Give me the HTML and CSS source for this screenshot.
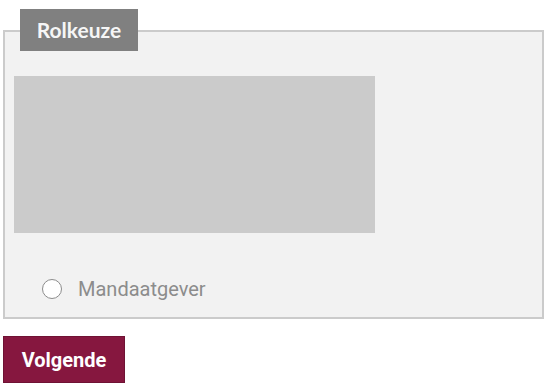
FILE: index.html
```html
<!DOCTYPE html>
<html lang="nl">
<head>
<meta charset="utf-8">
<link rel="stylesheet" href="styles.css">
</head>
<body>
<form class="page">
  <div class="role-set" role="group" aria-labelledby="rol-title">
    <div class="role-legend" id="rol-title">Rolkeuze</div>
    <div class="placeholder"></div>
    <label class="option">
      <input type="radio" name="rol" class="radio">
      <span class="option-label">Mandaatgever</span>
    </label>
  </div>
  <button type="button" class="next-btn">Volgende</button>
</form>
</body>
</html>
```
FILE: styles.css
```css
html, body {
  margin: 0;
  padding: 0;
  background: #ffffff;
}
.page {
  margin: 0;
  padding: 0;
  display: flex;
  flex-direction: column;
  align-items: flex-start;
}
.role-set {
  box-sizing: border-box;
  margin: 30px 1px 0 3px;
  width: 541px;
  padding: 0;
  border: 2px solid #cbcbcb;
  background: #f2f2f2;
  display: flex;
  flex-direction: column;
  align-items: flex-start;
}
.role-legend {
  box-sizing: border-box;
  margin: -23px 0 0 15px;
  width: 118px;
  height: 42px;
  background: #808080;
  color: #f6f6f6;
  font-family: Lato, "Liberation Sans", sans-serif;
  font-weight: 700;
  font-size: 21px;
  line-height: 42px;
  text-align: center;
}
.placeholder {
  margin: 25px 0 0 9px;
  width: 361px;
  height: 157px;
  background: #cbcbcb;
}
.option {
  display: flex;
  align-items: center;
  margin: 46px 0 18px 37px;
  height: 20px;
  cursor: pointer;
}
.radio {
  appearance: none;
  -webkit-appearance: none;
  box-sizing: border-box;
  margin: 0;
  width: 20px;
  height: 20px;
  border-radius: 50%;
  border: 1.5px solid #8c8c8c;
  background: #ffffff;
}
.option-label {
  margin-left: 16px;
  font-family: Roboto, "Liberation Sans", sans-serif;
  font-size: 20px;
  color: #8c8c8c;
  line-height: 20px;
}
.next-btn {
  box-sizing: border-box;
  margin: 17px 0 0 3px;
  width: 122px;
  height: 47px;
  padding: 0;
  border: 1px solid #6f1234;
  background: #86173f;
  color: #ffffff;
  font-family: Roboto, "Liberation Sans", sans-serif;
  font-weight: 700;
  font-size: 20px;
  cursor: pointer;
}
```
